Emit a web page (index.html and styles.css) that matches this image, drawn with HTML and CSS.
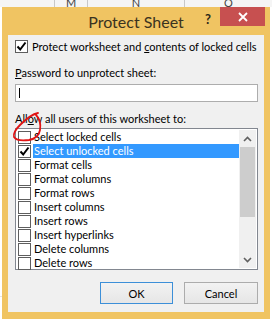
FILE: index.html
```html
<!DOCTYPE html>
<html>
<head>
<meta charset="utf-8">
<link rel="stylesheet" href="styles.css">
</head>
<body>
<div class="sheet">
  <div class="colheads">
    <span class="col c1"></span><span class="col c2">M</span><span class="col c3">N</span><span class="col c4">O</span>
  </div>
  <div class="dialog">
    <div class="titlebar">
      <span class="title">Protect Sheet</span>
      <span class="help">?</span>
      <span class="close">
        <svg width="10" height="10" viewBox="0 0 10 10"><path d="M1 1 L9 9 M9 1 L1 9" stroke="#fff" stroke-width="1.8"/></svg>
      </span>
    </div>
    <div class="body">
      <label class="chk-row">
        <span class="box checked"><svg width="11" height="11" viewBox="0 0 11 11"><path d="M1.5 5.5 L4.2 8.5 L9.5 1.5" fill="none" stroke="#000" stroke-width="2"/></svg></span>
        <span class="nowrap">Protect worksheet and <u>c</u>ontents of locked cells</span>
      </label>
      <div class="label pw"><u>P</u>assword to unprotect sheet:</div>
      <div class="input"><span class="caret"></span></div>
      <div class="label allow">All<u>o</u>w all users of this worksheet to:</div>
      <div class="list">
        <div class="items">
          <div class="item"><span class="box"></span><span class="txt">Select locked cells</span></div>
          <div class="item"><span class="box checked"><svg width="11" height="11" viewBox="0 0 11 11"><path d="M1.5 5.5 L4.2 8.5 L9.5 1.5" fill="none" stroke="#000" stroke-width="2"/></svg></span><span class="txt sel">Select unlocked cells</span></div>
          <div class="item"><span class="box"></span><span class="txt">Format cells</span></div>
          <div class="item"><span class="box"></span><span class="txt">Format columns</span></div>
          <div class="item"><span class="box"></span><span class="txt">Format rows</span></div>
          <div class="item"><span class="box"></span><span class="txt">Insert columns</span></div>
          <div class="item"><span class="box"></span><span class="txt">Insert rows</span></div>
          <div class="item"><span class="box"></span><span class="txt">Insert hyperlinks</span></div>
          <div class="item"><span class="box"></span><span class="txt">Delete columns</span></div>
          <div class="item"><span class="box"></span><span class="txt">Delete rows</span></div>
        </div>
        <div class="scroll">
          <span class="arrow up"><svg width="9" height="6" viewBox="0 0 9 6"><path d="M1 5 L4.5 1.5 L8 5" fill="none" stroke="#606060" stroke-width="1.6"/></svg></span>
          <span class="thumb"></span>
          <span class="track"></span>
          <span class="arrow down"><svg width="9" height="6" viewBox="0 0 9 6"><path d="M1 1 L4.5 4.5 L8 1" fill="none" stroke="#606060" stroke-width="1.6"/></svg></span>
        </div>
      </div>
      <div class="buttons">
        <button class="btn ok">OK</button>
        <button class="btn">Cancel</button>
      </div>
    </div>
  </div>
  <svg class="annot" width="36" height="36" viewBox="0 0 36 36"><path d="M30 3 C25 4 18 9 12 15 C8 19 5 23 6 27 C8 30 14 31 21 30 C27 29 31 26 32 20 C33 14 31 8 28 5" fill="none" stroke="#e01414" stroke-width="1.8" stroke-linecap="round"/></svg>
</div>
</body>
</html>
```
FILE: styles.css
```css
* { box-sizing: border-box; }
html, body { margin: 0; padding: 0; }
body {
  width: 272px; height: 321px; overflow: hidden;
  background: #ffffff;
  font-family: Lato, "Noto Sans", sans-serif;
  font-size: 11px; color: #000;
}
.sheet { position: relative; width: 272px; height: 321px;
  background:
    linear-gradient(#e4e4e4, #e4e4e4) 0 296px / 2px 1px no-repeat,
    #fff;
}
.colheads { height: 7px; display: flex; background: #f5f5f5; overflow: hidden; }
.col { flex: none; width: 65px; border-right: 1px solid #c8c8c8; text-align: center;
  font-size: 11px; line-height: 5px; color: #444; }
.c1 { width: 55px; }
.c2 { width: 33px; }
.c3 { width: 97px; }
.c4 { width: 87px; border-right: 0; }

.dialog {
  margin-left: 2px; width: 268px; height: 312px;
  background: #f0c462;
  padding: 0 6px 7px 6px;
  display: flex; flex-direction: column;
}
.titlebar { height: 28px; flex: none; display: flex; align-items: center; position: relative; }
.title { position: absolute; left: 0; right: 0; text-align: center; top: 5px;
  font-size: 16px; color: #3a3220; }
.help { position: absolute; left: 197px; top: 4px; font-weight: bold; font-size: 13px; color: #2c2718; }
.close { position: absolute; left: 212px; top: 0; width: 45px; height: 19px; background: #c75050;
  display: flex; align-items: center; justify-content: center; }

.body { flex: 1; background: #f0f0f0; padding: 5px 6px 0 7px; display: flex; flex-direction: column; }
.nowrap { white-space: nowrap; }
.chk-row { display: flex; align-items: center; gap: 4px; height: 13px; }
.box { flex: none; width: 13px; height: 13px; border: 1px solid #5e5e5e; background: #fff;
  display: inline-flex; align-items: center; justify-content: center; }
.label { height: 13px; line-height: 13px; white-space: nowrap; }
.pw { margin-top: 13px; }
.input { margin-top: 5px; height: 18px; width: 243px; background: #fff; border: 1px solid #adadad; position: relative; }
.caret { position: absolute; left: 3px; top: 3px; width: 1px; height: 10px; background: #000; }
.allow { margin-top: 10px; }
.list { margin-top: 3px; width: 243px; height: 142px; background: #fff; border: 1px solid #828790;
  display: flex; padding: 1px 1px 1px 2px; }
.items { flex: 1; display: flex; flex-direction: column; }
.item { height: 14px; display: flex; align-items: center; gap: 2px; white-space: nowrap; }
.txt { padding: 0 1px; line-height: 14px; height: 14px; }
.txt.sel { background: #3399ff; color: #fff; flex: 1; }
.scroll { width: 17px; flex: none; background: #f0f0f0; display: flex; flex-direction: column; align-items: center; }
.arrow { height: 17px; flex: none; display: flex; align-items: center; justify-content: center; }
.thumb { width: 15px; height: 70px; background: #cdcdcd; flex: none; }
.track { flex: 1; }
.buttons { margin-top: 12px; display: flex; justify-content: flex-end; gap: 11px; padding-right: 0; width: 243px; }
.btn { width: 74px; height: 22px; font: inherit; color: #000; background: linear-gradient(#f2f2f2, #e6e6e6);
  border: 1px solid #acacac; padding: 0; }
.btn.ok { width: 73px; border-color: #3c8fd8; }
.annot { position: absolute; left: 8px; top: 110px; }
```
